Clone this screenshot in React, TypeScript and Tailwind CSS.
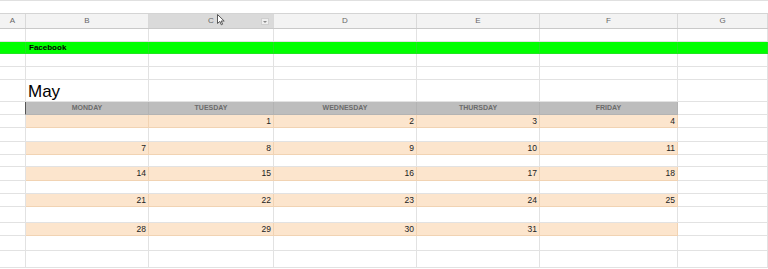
const cols = [26, 123, 125, 143, 123, 138, 90];
const letters = ['A', 'B', 'C', 'D', 'E', 'F', 'G'];
const days = ['MONDAY', 'TUESDAY', 'WEDNESDAY', 'THURSDAY', 'FRIDAY'];

// each week: height of the date row, then the blank row under it
const weeks: { nums: (number | null)[]; h: number; gap: number }[] = [
  { nums: [null, 1, 2, 3, 4], h: 13, gap: 14 },
  { nums: [7, 8, 9, 10, 11], h: 13, gap: 12 },
  { nums: [14, 15, 16, 17, 18], h: 14, gap: 13 },
  { nums: [21, 22, 23, 24, 25], h: 13, gap: 16 },
  { nums: [28, 29, 30, 31, null], h: 13, gap: 15 },
];

function Cell({ w, className = '', children }: { w: number; className?: string; children?: React.ReactNode }) {
  return (
    <div style={{ width: w }} className={`shrink-0 h-full border-r border-b border-[#e2e2e2] ${className}`}>
      {children}
    </div>
  );
}

function BlankRow({ h }: { h: number }) {
  return (
    <div style={{ height: h }} className="flex">
      {cols.map((w, i) => (
        <Cell key={i} w={w} />
      ))}
    </div>
  );
}

function Cursor() {
  return (
    <svg width="8" height="12" viewBox="0 0 8 12" className="absolute left-[217px] top-[14px]">
      <path d="M0.5 0.5 L0.5 9.5 L2.8 7.4 L4.3 10.8 L5.6 10.2 L4.2 7 L7.2 7 Z" fill="#fff" stroke="#555" strokeWidth="1" strokeLinejoin="round" />
    </svg>
  );
}

export default function App() {
  return (
    <div className="relative w-[768px] h-[269px] overflow-hidden bg-white text-[#333]" style={{ fontFamily: '"Liberation Sans", Arial, sans-serif' }}>
      {/* toolbar edge */}
      <div className="h-[14px] border-t border-[#e0e0e0] border-b border-b-[#d4d4d4]" />

      {/* column headers */}
      <div className="flex h-[15px] bg-[#f3f3f3] border-b border-[#c9c9c9]">
        {cols.map((w, i) => (
          <div
            key={i}
            style={{ width: w }}
            className={`shrink-0 relative flex items-center justify-center border-r border-[#d9d9d9] text-[8px] text-[#666] ${i === 2 ? 'bg-[#dadada]' : ''}`}
          >
            {letters[i]}
            {i === 2 && (
              <div className="absolute right-[4px] top-[4px] w-[8px] h-[7px] bg-[#eeeeee] border border-[#cfcfcf] flex items-center justify-center">
                <div className="w-0 h-0 border-l-[2px] border-r-[2px] border-t-[2px] border-l-transparent border-r-transparent border-t-[#888]" />
              </div>
            )}
          </div>
        ))}
      </div>
      <Cursor />

      <BlankRow h={13} />

      {/* Facebook row */}
      <div className="flex h-[12px] bg-[#00ff00]">
        {cols.map((w, i) => (
          <div key={i} style={{ width: w }} className="shrink-0 h-full border-r border-b border-[#22e322] flex items-center">
            {i === 1 && <span className="pl-[3px] text-[8px] font-bold text-black leading-none">Facebook</span>}
          </div>
        ))}
      </div>

      <BlankRow h={13} />
      <BlankRow h={13} />

      {/* month title */}
      <div className="flex h-[22px]">
        {cols.map((w, i) => (
          <Cell key={i} w={w} className="flex items-end">
            {i === 1 && <span className="pl-[2px] pb-[1px] text-[17px] leading-none text-black">May</span>}
          </Cell>
        ))}
      </div>

      {/* day names */}
      <div className="flex h-[13px]">
        <Cell w={cols[0]} className="border-r-[#555]" />
        {days.map((d, i) => (
          <div
            key={d}
            style={{ width: cols[i + 1] }}
            className="shrink-0 h-full bg-[#bdbdbd] border-r border-b border-[#b3b3b3] flex items-center justify-center text-[7px] font-bold text-[#6b6b6b]"
          >
            {d}
          </div>
        ))}
        <Cell w={cols[6]} />
      </div>

      {weeks.map((wk, r) => (
        <div key={r}>
          <div style={{ height: wk.h }} className="flex">
            <Cell w={cols[0]} />
            {wk.nums.map((n, i) => (
              <div
                key={i}
                style={{ width: cols[i + 1] }}
                className="shrink-0 h-full bg-[#fce5cd] border-r border-b border-[#f1d3b3] flex items-center justify-end pr-[2px] text-[8.5px] text-[#222]"
              >
                {n}
              </div>
            ))}
            <Cell w={cols[6]} />
          </div>
          <BlankRow h={wk.gap} />
        </div>
      ))}

      <BlankRow h={17} />
    </div>
  );
}
